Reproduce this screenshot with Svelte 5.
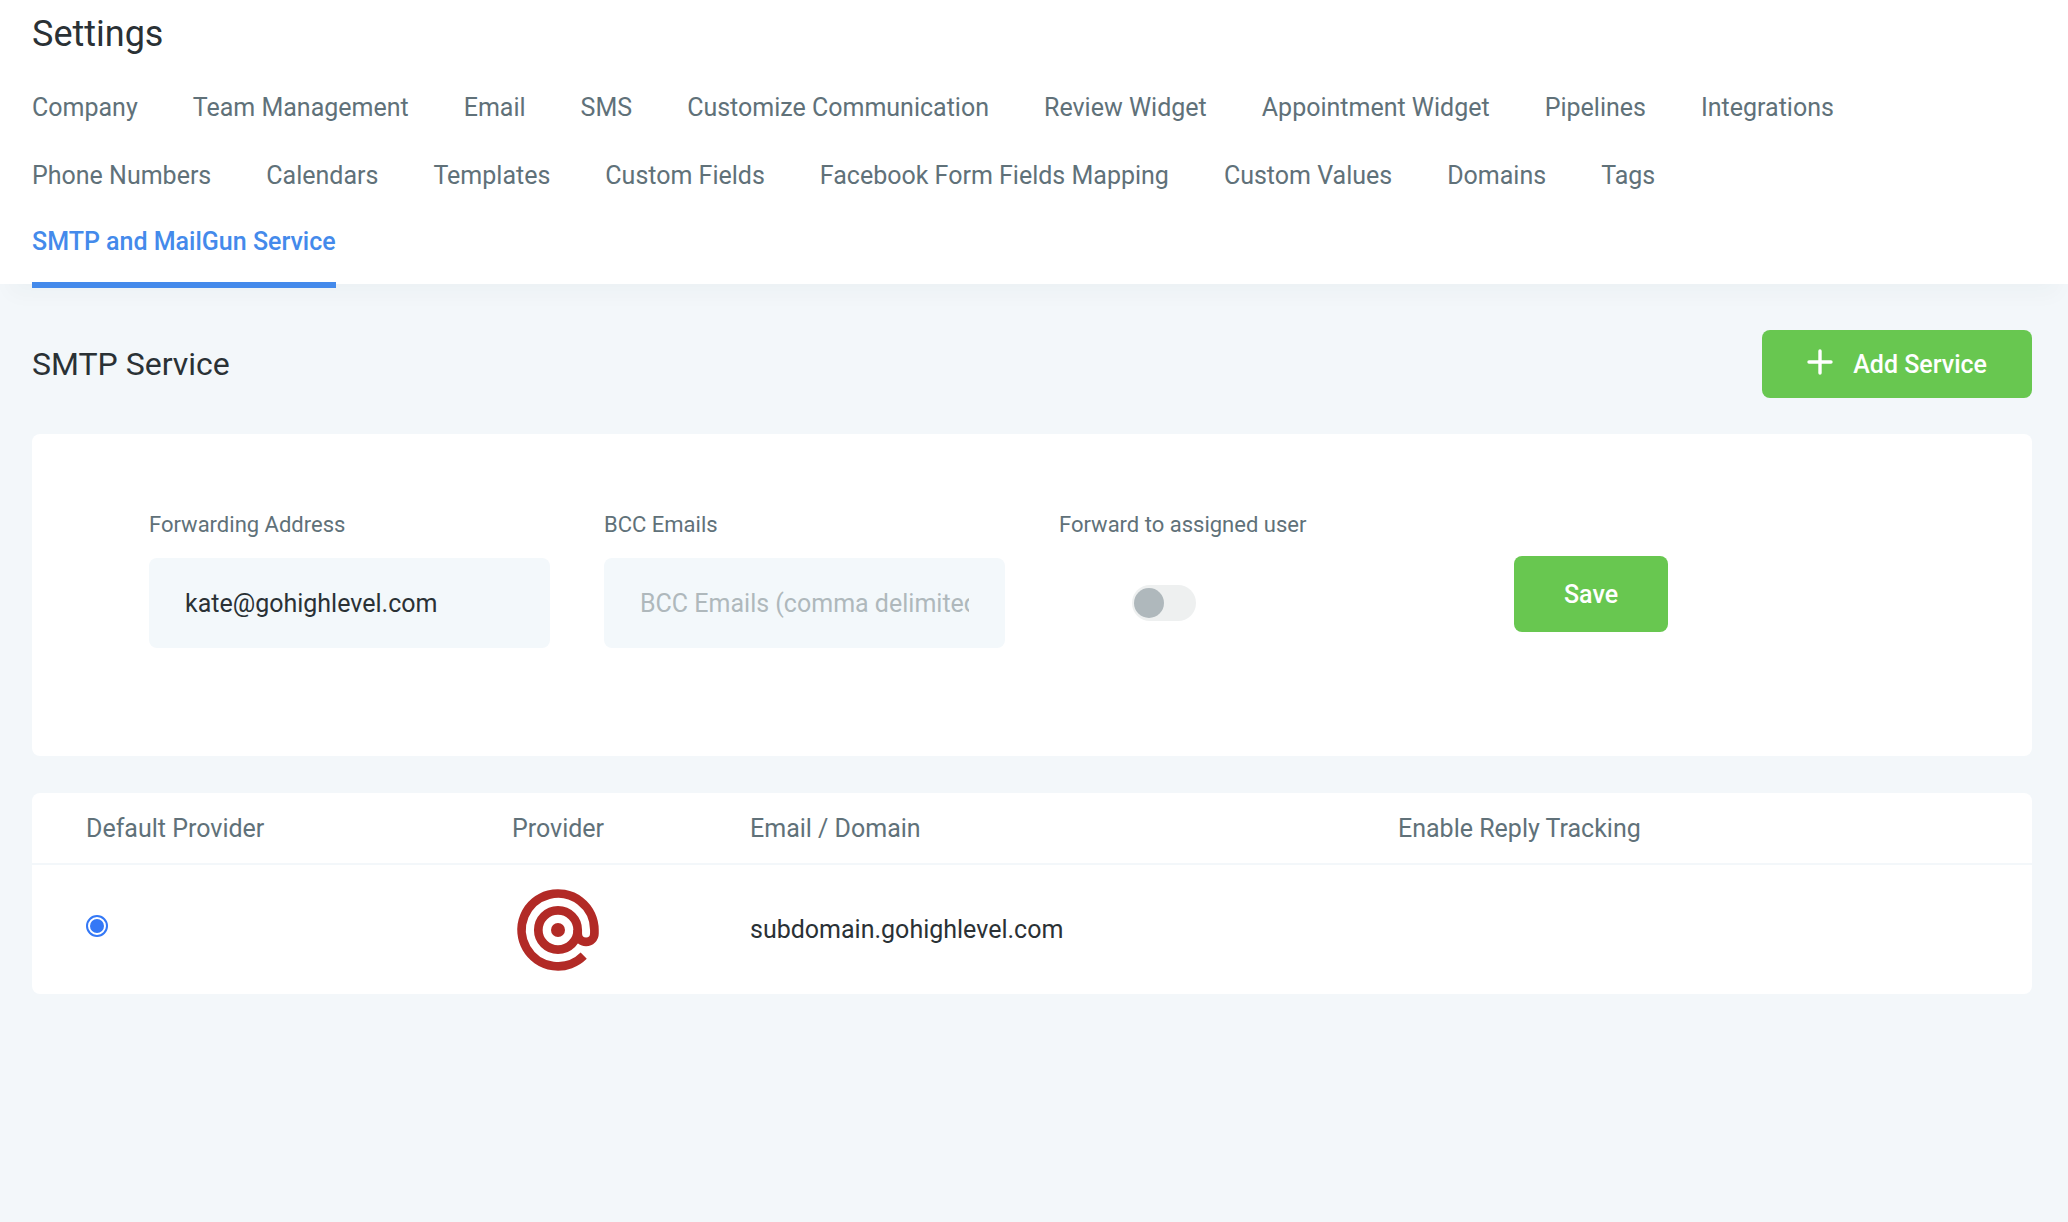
<script lang="ts">
  interface Service {
    id: string;
    domain: string;
  }

  const tabs = [
    "Company",
    "Team Management",
    "Email",
    "SMS",
    "Customize Communication",
    "Review Widget",
    "Appointment Widget",
    "Pipelines",
    "Integrations",
    "Phone Numbers",
    "Calendars",
    "Templates",
    "Custom Fields",
    "Facebook Form Fields Mapping",
    "Custom Values",
    "Domains",
    "Tags",
    "SMTP and MailGun Service",
  ];

  const services: Service[] = [
    { id: "mailgun", domain: "subdomain.gohighlevel.com" },
  ];

  let activeTab = $state("SMTP and MailGun Service");
  let forwardingAddress = $state("kate@gohighlevel.com");
  let bccEmails = $state("");
  let forwardToUser = $state(false);
  let defaultProvider = $state("mailgun");
</script>

<header class="topbar">
  <h1>Settings</h1>
  <nav>
    <ul class="tabs">
      {#each tabs as tab}
        <li>
          <a
            href="#settings"
            class="tab"
            class:active={tab === activeTab}
            onclick={() => (activeTab = tab)}>{tab}</a
          >
        </li>
      {/each}
    </ul>
  </nav>
</header>

<main>
  <div class="section-head">
    <h2>SMTP Service</h2>
    <button class="btn btn-add" type="button">
      <svg class="plus" viewBox="0 0 26 26" aria-hidden="true">
        <path d="M13 2v22M2 13h22" />
      </svg>
      Add Service
    </button>
  </div>

  <form class="card forwarding" onsubmit={(e) => e.preventDefault()}>
    <div class="field">
      <label for="forwarding">Forwarding Address</label>
      <input id="forwarding" class="text-input" type="text" bind:value={forwardingAddress} />
    </div>
    <div class="field">
      <label for="bcc">BCC Emails</label>
      <input
        id="bcc"
        class="text-input"
        type="text"
        placeholder="BCC Emails (comma delimited)"
        bind:value={bccEmails}
      />
    </div>
    <div class="field">
      <label for="forward-user">Forward to assigned user</label>
      <input id="forward-user" class="toggle" type="checkbox" bind:checked={forwardToUser} />
    </div>
    <div class="field">
      <button class="btn btn-save" type="submit">Save</button>
    </div>
  </form>

  <div class="card">
    <table>
      <thead>
        <tr>
          <th class="col-default">Default Provider</th>
          <th class="col-provider">Provider</th>
          <th class="col-domain">Email / Domain</th>
          <th>Enable Reply Tracking</th>
        </tr>
      </thead>
      <tbody>
        {#each services as service}
          <tr>
            <td>
              <input
                class="radio"
                type="radio"
                name="default-provider"
                aria-label="Use {service.domain} as default"
                value={service.id}
                bind:group={defaultProvider}
              />
            </td>
            <td>
              <svg class="mailgun" viewBox="-46 -46 92 92" role="img" aria-label="Mailgun">
                <path
                  d="M25.7 25.7A36.4 36.4 0 1 1 36.4 0V3.5A8.35 8.35 0 0 1 19.7 3.5V0"
                />
                <circle class="ring" r="19.7" />
                <circle class="dot" r="7" />
              </svg>
            </td>
            <td>{service.domain}</td>
            <td></td>
          </tr>
        {/each}
      </tbody>
    </table>
  </div>
</main>

<style>
  :global(body) {
    margin: 0;
    background: #f3f7fa;
    color: #2a3135;
    font-family: Roboto, "Liberation Sans", sans-serif;
    font-size: 25px;
  }

  h1,
  h2 {
    margin: 0;
    font-weight: 400;
  }

  h1 {
    font-size: 36px;
    line-height: 44px;
  }

  h2 {
    font-size: 32px;
    line-height: 44px;
  }

  .topbar {
    padding: 12px 108px 0 32px;
    background: #fff;
    box-shadow: 0 20px 20px -10px rgba(42, 49, 53, 0.03);
  }

  .tabs {
    display: flex;
    flex-wrap: wrap;
    gap: 38px 55px;
    margin: 0;
    padding: 37px 0 0;
    list-style: none;
  }

  .tab {
    display: block;
    line-height: 30px;
    color: #607179;
    text-decoration: none;
  }

  .tab.active {
    margin-bottom: -4px;
    padding-bottom: 27px;
    border-bottom: 6px solid #448aeb;
    color: #448aeb;
    font-weight: 500;
    line-height: 26px;
  }

  main {
    padding: 46px 36px 46px 32px;
  }

  .section-head {
    display: flex;
    align-items: center;
    justify-content: space-between;
    margin-bottom: 36px;
  }

  .btn {
    border: 0;
    border-radius: 8px;
    background: #68c750;
    color: #fff;
    font: inherit;
    font-weight: 500;
    cursor: pointer;
  }

  .btn-add {
    display: flex;
    align-items: center;
    gap: 20px;
    height: 68px;
    padding: 0 45px;
  }

  .plus {
    width: 26px;
    height: 26px;
    margin-bottom: 5px;
    fill: none;
    stroke: #fff;
    stroke-width: 3.4;
    stroke-linecap: round;
  }

  .card {
    margin-bottom: 37px;
    border-radius: 8px;
    background: #fff;
  }

  .forwarding {
    display: grid;
    grid-template-columns: repeat(4, 1fr);
    gap: 54px;
    padding: 76px 117px 108px;
  }

  .field {
    display: flex;
    flex-direction: column;
    align-items: flex-start;
  }

  .field label {
    margin-bottom: 18px;
    color: #607179;
    font-size: 22px;
    line-height: 30px;
  }

  .text-input {
    box-sizing: border-box;
    width: 100%;
    height: 90px;
    padding: 0 36px;
    border: 0;
    border-radius: 8px;
    background: #f3f8fb;
    color: #2a3135;
    font: inherit;
  }

  .text-input::placeholder {
    color: #afb8bc;
    opacity: 1;
  }

  .toggle {
    display: flex;
    align-items: center;
    width: 64px;
    height: 36px;
    margin: 27px 0 0 73px;
    padding: 0 2px;
    border-radius: 18px;
    box-sizing: border-box;
    background: #eef0f0;
    appearance: none;
  }

  .toggle::before {
    content: "";
    width: 30px;
    height: 30px;
    border-radius: 50%;
    background: #afb8bc;
  }

  .toggle:checked {
    justify-content: flex-end;
  }

  .btn-save {
    width: 154px;
    height: 76px;
    margin-top: 46px;
  }

  table {
    width: 100%;
    border-collapse: collapse;
    table-layout: fixed;
  }

  th,
  td {
    box-sizing: border-box;
    padding: 0 0 0 54px;
    text-align: left;
    font-weight: 400;
  }

  th {
    height: 71px;
    border-bottom: 2px solid #f3f7fa;
    color: #607179;
  }

  td {
    height: 130px;
  }

  .col-default {
    width: 21.3%;
  }

  .col-provider {
    width: 11.9%;
  }

  .col-domain {
    width: 32.4%;
  }

  .radio {
    display: grid;
    place-items: center;
    box-sizing: border-box;
    width: 22px;
    height: 22px;
    margin: 0 0 8px;
    border: 2px solid #3478f6;
    border-radius: 50%;
    appearance: none;
  }

  .radio:checked::before {
    content: "";
    width: 14px;
    height: 14px;
    border-radius: 50%;
    background: #3478f6;
  }

  .mailgun {
    display: block;
    width: 92px;
    height: 92px;
    fill: none;
    stroke: #b22a26;
    stroke-width: 8.7;
  }

  .mailgun .dot {
    fill: #b22a26;
    stroke: none;
  }
</style>
